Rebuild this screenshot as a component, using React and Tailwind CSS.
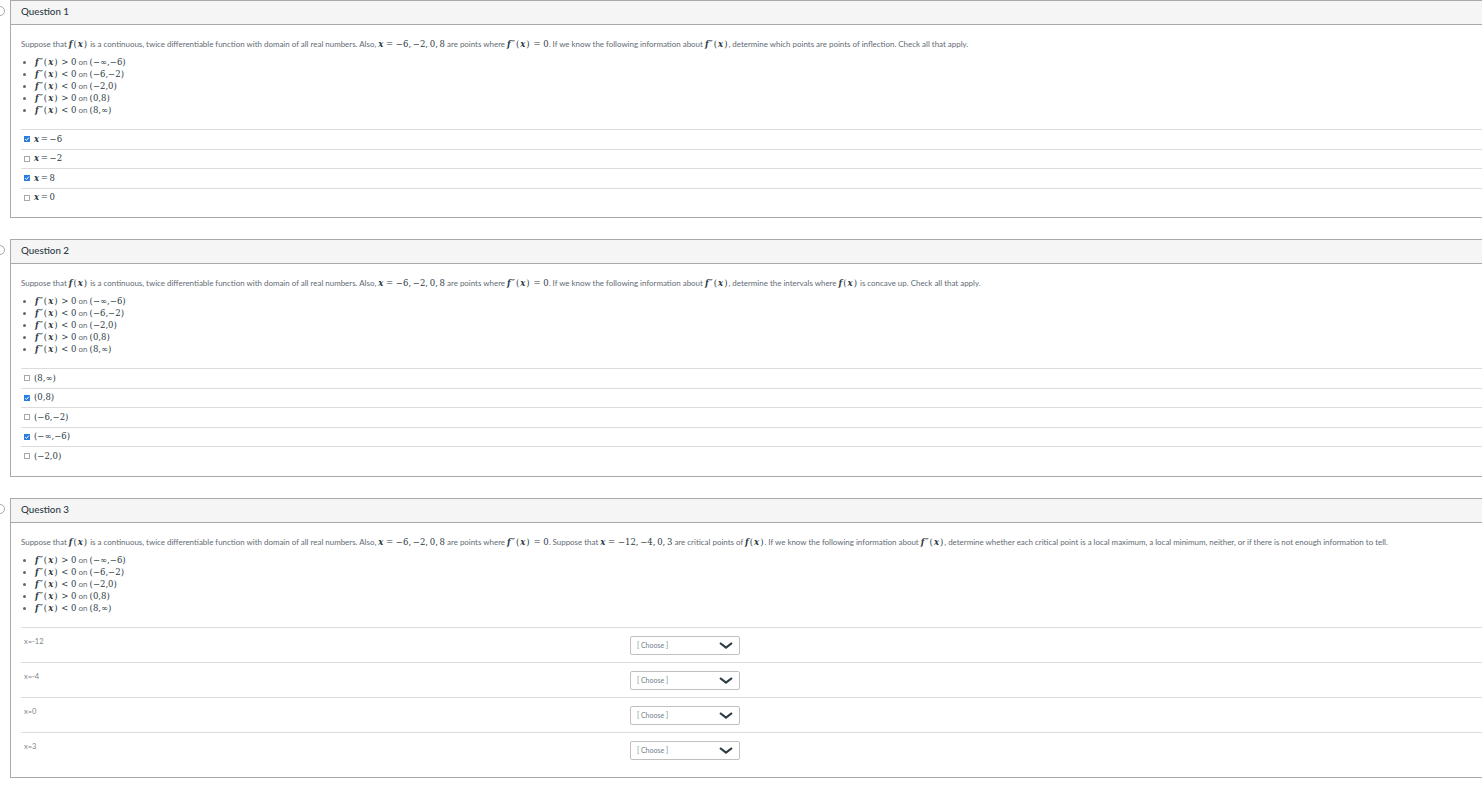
const M = ({ children }) => (
  <span className="font-['DejaVu_Serif',serif] text-[8.5px] text-[#2d3b45]">{children}</span>
);
const I = ({ children }) => <i className="font-bold">{children}</i>;

// function names get extra room, the math in the reference is set quite loose
const Fn = ({ prime }) => (
  <span className="tracking-[1px]">
    <I>f</I>
    {prime && "″"}(<I>x</I>)
  </span>
);

const Fx = () => (
  <M>
    <Fn />
  </M>
);
const Fpp = () => (
  <M>
    <Fn prime />
  </M>
);
const Zeros = () => (
  <>
    <M>
      <I>x</I> = −6,&#8201;−2,&#8201;0,&#8201;8
    </M>{" "}
    are points where{" "}
    <M>
      <Fn prime /> = 0
    </M>
    .
  </>
);

const signs = [
  [">", "(−∞,−6)"],
  ["<", "(−6,−2)"],
  ["<", "(−2,0)"],
  [">", "(0,8)"],
  ["<", "(8,∞)"],
];

const Checkbox = ({ checked }) =>
  checked ? (
    <span className="w-[6px] h-[6px] bg-[#2b7de0] flex items-center justify-center shrink-0">
      <svg viewBox="0 0 6 6" className="w-[6px] h-[6px]">
        <path d="M1.2 3.2 L2.5 4.4 L4.9 1.6" fill="none" stroke="white" strokeWidth="1" />
      </svg>
    </span>
  ) : (
    <span className="w-[6px] h-[6px] border border-[#a8a8a8] bg-white shrink-0"></span>
  );

const CheckRow = ({ checked, children }) => (
  <div className="h-[19.5px] border-t border-[#dcdcdc] flex items-center gap-[4px] pl-[3px]">
    <Checkbox checked={checked} />
    <M>{children}</M>
  </div>
);

const SelectRow = ({ label }) => (
  <div className="h-[35px] border-t border-[#dcdcdc] flex">
    <div className="w-[609px] pl-[3px] pt-[9px] text-[7.5px] leading-[10px] text-[#7a858c]">{label}</div>
    <div className="w-[110px] h-[19px] mt-[8px] border border-[#c0c0c0] rounded-[2px] flex items-center justify-between pl-[6px] pr-[6px] bg-white">
      <span className="text-[7px] text-[#6f7f8a]">[ Choose ]</span>
      <svg viewBox="0 0 14 7" className="w-[14px] h-[7px]">
        <path d="M1 1 L7 5.6 L13 1" fill="none" stroke="#2d3b45" strokeWidth="2.2" />
      </svg>
    </div>
  </div>
);

const Question = ({ title, intro, children }) => (
  <div className="relative">
    <div className="absolute left-[-5px] top-[6px] w-[10px] h-[10px] rounded-full border border-[#a8a8a8] bg-white"></div>
    <div className="ml-[10px] mr-[-4px] border border-[#a9a9a9]">
      <div className="h-[24px] bg-[#f5f5f5] border-b border-[#a9a9a9] pl-[10px] pb-[2px] flex items-center text-[9.8px] font-medium text-[#2d3b45]">
        {title}
      </div>
      <div className="pt-[13px] pb-[10px] pl-[10px]">
        <p className="text-[7.94px] leading-[12px] text-[#5f6b74]">{intro}</p>
        <ul className="mt-[6px] mb-[13px] list-disc pl-[14px] text-[7.94px] leading-[12px] text-[#5f6b74]">
          {signs.map(([sign, range]) => (
            <li key={range}>
              <M>
                <Fn prime /> {sign} 0
              </M>{" "}
              on <M>{range}</M>
            </li>
          ))}
        </ul>
        {children}
      </div>
    </div>
  </div>
);

export default function App() {
  return (
    <div className="w-[1482px] h-[800px] overflow-hidden bg-white font-['Lato','Liberation_Sans',sans-serif] flex flex-col gap-[21px]">
      <Question
        title="Question 1"
        intro={
          <>
            Suppose that <Fx /> is a continuous, twice differentiable function with domain of all real numbers. Also, <Zeros /> If we know the following information about <Fpp />, determine which points are points of inflection. Check all that apply.
          </>
        }
      >
        <CheckRow checked><I>x</I>&#8201;=&#8201;−6</CheckRow>
        <CheckRow><I>x</I>&#8201;=&#8201;−2</CheckRow>
        <CheckRow checked><I>x</I>&#8201;=&#8201;8</CheckRow>
        <CheckRow><I>x</I>&#8201;=&#8201;0</CheckRow>
      </Question>
      <Question
        title="Question 2"
        intro={
          <>
            Suppose that <Fx /> is a continuous, twice differentiable function with domain of all real numbers. Also, <Zeros /> If we know the following information about <Fpp />, determine the intervals where <Fx /> is concave up. Check all that apply.
          </>
        }
      >
        <CheckRow>(8,∞)</CheckRow>
        <CheckRow checked>(0,8)</CheckRow>
        <CheckRow>(−6,−2)</CheckRow>
        <CheckRow checked>(−∞,−6)</CheckRow>
        <CheckRow>(−2,0)</CheckRow>
      </Question>
      <Question
        title="Question 3"
        intro={
          <>
            Suppose that <Fx /> is a continuous, twice differentiable function with domain of all real numbers. Also, <Zeros /> Suppose that <M><I>x</I> = −12,&#8201;−4,&#8201;0,&#8201;3</M> are critical points of <Fx />. If we know the following information about <Fpp />, determine whether each critical point is a local maximum, a local minimum, neither, or if there is not enough information to tell.
          </>
        }
      >
        <SelectRow label="x=-12" />
        <SelectRow label="x=-4" />
        <SelectRow label="x=0" />
        <SelectRow label="x=3" />
      </Question>
    </div>
  );
}
